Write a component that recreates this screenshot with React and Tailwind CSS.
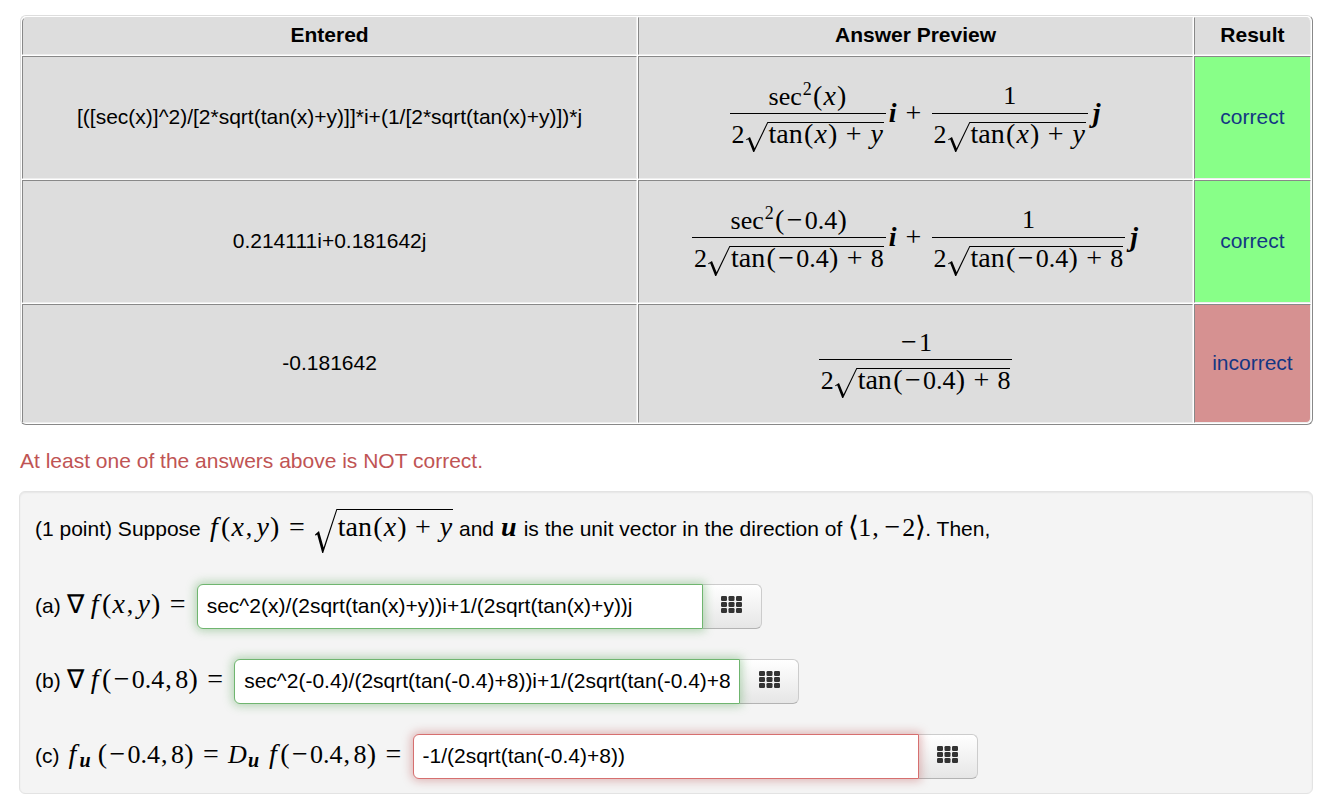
import { useState } from 'react'

// ---- small math typesetting helpers ----

function M({ children }) {
  return (
    <span className="inline-flex items-baseline whitespace-nowrap font-['Liberation_Serif',serif] text-[26px] leading-[22px]">
      {children}
    </span>
  )
}

function Var({ children }) {
  return <span className="w-[14px] text-center text-[28px] italic">{children}</span>
}

function Vec({ children }) {
  return <span className="px-px text-[28px] font-bold italic">{children}</span>
}

function Paren({ children }) {
  return <span className="w-[10px] text-center text-[28px]">{children}</span>
}

// binary operator
function Op({ children }) {
  return <span className="w-8 text-center text-[28px]">{children}</span>
}

function Equals() {
  return <span className="w-[34px] text-center text-[28px]">=</span>
}

function Minus() {
  return <span className="w-5 text-center text-[28px]">−</span>
}

function Comma() {
  return <span className="w-[11px] pl-px">,</span>
}

function Nabla() {
  return <span className="w-[21px]">∇</span>
}

function Sub({ children }) {
  return <sub className="top-1 w-[18px] text-[20px] leading-none font-bold italic">{children}</sub>
}

function Frac({ top, bottom }) {
  return (
    <span className="inline-flex flex-col items-center pb-[2px]">
      <span className="flex h-7 items-baseline pb-[6px]">{top}</span>
      <span className="flex items-baseline justify-center self-stretch border-t border-black px-[2px] pt-2">
        {bottom}
      </span>
    </span>
  )
}

function Sqrt({ tall, children }) {
  return (
    <span className="inline-flex items-baseline">
      <span className="relative ml-px w-[22px] self-stretch">
        <svg
          className={'absolute top-0 left-0 w-full ' + (tall ? 'h-[44px]' : 'h-[30px]')}
          viewBox="0 0 22 44"
          preserveAspectRatio="none"
          aria-hidden="true"
        >
          <path d="M0 25.5 L4 22 L8.6 38.5 L21.4 0 L22 0 L22 1.6 L8.2 44 L7.2 44 L2.2 25.4 L0.6 26.8 Z" />
        </svg>
      </span>
      <span className={'flex items-baseline border-t border-black ' + (tall ? 'pt-[6px]' : '')}>{children}</span>
    </span>
  )
}

function Tan() {
  return <span className="px-px text-[28px]">tan</span>
}

function TanXY() {
  return (
    <>
      <Tan />
      <Paren>(</Paren>
      <Var>x</Var>
      <Paren>)</Paren>
      <Op>+</Op>
      <Var>y</Var>
    </>
  )
}

function TanNum() {
  return (
    <>
      <Tan />
      <Paren>(</Paren>
      <Minus />
      <span>0.4</span>
      <Paren>)</Paren>
      <Op>+</Op>
      <span>8</span>
    </>
  )
}

// (x, y)
function PointXY() {
  return (
    <>
      <Paren>(</Paren>
      <Var>x</Var>
      <Comma />
      <Var>y</Var>
      <Paren>)</Paren>
    </>
  )
}

// (-0.4, 8)
function PointNum() {
  return (
    <>
      <Paren>(</Paren>
      <Minus />
      <span>0.4</span>
      <Comma />
      <span>8</span>
      <Paren>)</Paren>
    </>
  )
}

function Sec({ children }) {
  return (
    <>
      <span>sec</span>
      <sup className="top-[-10px] px-px text-[18px] leading-none">2</sup>
      <Paren>(</Paren>
      {children}
      <Paren>)</Paren>
    </>
  )
}

function Root({ children }) {
  return (
    <>
      <span>2</span>
      <Sqrt>{children}</Sqrt>
    </>
  )
}

function GradientPreview({ arg, radicand }) {
  return (
    <M>
      <span className="inline-flex items-center">
        <Frac top={<Sec>{arg}</Sec>} bottom={<Root>{radicand}</Root>} />
        <span className="flex items-baseline px-[2px] pb-[8px]">
          <Vec>i</Vec>
          <Op>+</Op>
        </span>
        <Frac top="1" bottom={<Root>{radicand}</Root>} />
        <span className="flex items-baseline pb-[8px] pl-[4px]">
          <Vec>j</Vec>
        </span>
      </span>
    </M>
  )
}

const RESULTS = [
  {
    entered: '[([sec(x)]^2)/[2*sqrt(tan(x)+y)]]*i+(1/[2*sqrt(tan(x)+y)])*j',
    preview: <GradientPreview arg={<Var>x</Var>} radicand={<TanXY />} />,
    correct: true,
    height: 'h-[123px]',
  },
  {
    entered: '0.214111i+0.181642j',
    preview: (
      <GradientPreview
        arg={
          <>
            <Minus />
            <span>0.4</span>
          </>
        }
        radicand={<TanNum />}
      />
    ),
    correct: true,
    height: 'h-[123px]',
  },
  {
    entered: '-0.181642',
    preview: (
      <M>
        <Frac
          top={
            <>
              <Minus />
              <span>1</span>
            </>
          }
          bottom={
            <Root>
              <TanNum />
            </Root>
          }
        />
      </M>
    ),
    correct: false,
    height: 'h-[119px]',
  },
]

const CELL = 'border border-t-[#888] border-l-[#888] border-r-[#eee] border-b-[#eee] px-0 pt-0 pb-[2px] text-center align-middle '

function ResultsTable() {
  return (
    <div className="pl-px">
      <table className="w-full table-fixed border-separate border-spacing-px rounded-md border border-t-[#ddd] border-r-[#888] border-b-[#888] border-l-[#ddd]">
        <colgroup>
          <col className="w-[47.8%]" />
          <col className="w-[43.1%]" />
          <col />
        </colgroup>
        <thead>
          <tr className="h-[38px]">
            <th className={CELL + 'rounded-tl-[5px] border-t-[#ddd] bg-[#ddd]'}>Entered</th>
            <th className={CELL + 'border-t-[#ddd] bg-[#ddd]'}>Answer Preview</th>
            <th className={CELL + 'rounded-tr-[5px] border-t-[#ddd] bg-[#ddd]'}>Result</th>
          </tr>
        </thead>
        <tbody>
          {RESULTS.map((r) => (
            <tr key={r.entered} className={r.height}>
              <td className={CELL + 'bg-[#ddd]'}>{r.entered}</td>
              <td className={CELL + 'bg-[#ddd]'}>
                <div className="flex justify-center">{r.preview}</div>
              </td>
              <td className={CELL + (r.correct ? 'bg-[#88ff88]' : 'rounded-br-[5px] bg-[#d69191]')}>
                <a href="#answers" className="text-[#133783]">
                  {r.correct ? 'correct' : 'incorrect'}
                </a>
              </td>
            </tr>
          ))}
        </tbody>
      </table>
    </div>
  )
}

function GridIcon() {
  return (
    <svg width="21" height="17" viewBox="0 0 21 17" fill="#333" aria-hidden="true">
      {[0, 6, 12].map((y) =>
        [0, 7.5, 15].map((x) => <rect key={x + '-' + y} x={x} y={y} width="6" height="5" rx="1.2" />),
      )}
    </svg>
  )
}

function AnswerRow({ id, part, label, initial, correct }) {
  const [value, setValue] = useState(initial)

  return (
    <div className="flex items-center">
      <label htmlFor={id} className="flex items-baseline gap-[6px] pb-[2px] whitespace-nowrap">
        <span>({part})</span>
        <M>{label}</M>
      </label>
      <div className="ml-[2px] flex">
        <input
          id={id}
          type="text"
          value={value}
          onChange={(e) => setValue(e.target.value)}
          className={
            'relative h-[45px] w-[506px] rounded-l-md border bg-white px-[9px] pb-[2px] text-black outline-none ' +
            (correct
              ? 'border-[#6fb56f] shadow-[0_0_10px_2px_rgba(81,163,81,0.4)]'
              : 'border-[#d66f6f] shadow-[0_0_10px_2px_rgba(191,84,84,0.4)]')
          }
        />
        <button
          type="button"
          aria-label="Open equation editor"
          className="flex h-[45px] w-[59px] items-center justify-center rounded-r-md border border-l-0 border-[#ccc] border-b-[#b3b3b3] bg-linear-to-b from-white to-[#e6e6e6] pb-1"
        >
          <GridIcon />
        </button>
      </div>
    </div>
  )
}

function Problem() {
  return (
    <section className="mt-[15px] flex flex-col rounded-md border border-[#e3e3e3] bg-[#f4f4f4] p-[14px] shadow-[inset_0_1px_2px_rgba(0,0,0,0.06)]">
      <p className="flex h-[48px] items-baseline gap-[6px] pt-[3px] pl-px whitespace-nowrap">
        <span>(1 point) Suppose</span>
        <M>
          <Var>f</Var>
          <PointXY />
          <Equals />
          <Sqrt tall>
            <TanXY />
          </Sqrt>
        </M>
        <span>and</span>
        <M>
          <Vec>u</Vec>
        </M>
        <span>is the unit vector in the direction of</span>
        <span className="flex items-baseline">
          <M>
            <Paren>⟨</Paren>
            <span>1</span>
            <Comma />
            <Minus />
            <span>2</span>
            <Paren>⟩</Paren>
          </M>
          <span>. Then,</span>
        </span>
      </p>

      <div className="mt-[30px] flex flex-col gap-[30px] pl-px">
        <AnswerRow
          id="answer-a"
          part="a"
          correct
          initial="sec^2(x)/(2sqrt(tan(x)+y))i+1/(2sqrt(tan(x)+y))j"
          label={
            <>
              <Nabla />
              <Var>f</Var>
              <PointXY />
              <Equals />
            </>
          }
        />
        <AnswerRow
          id="answer-b"
          part="b"
          correct
          initial="sec^2(-0.4)/(2sqrt(tan(-0.4)+8))i+1/(2sqrt(tan(-0.4)+8))j"
          label={
            <>
              <Nabla />
              <Var>f</Var>
              <PointNum />
              <Equals />
            </>
          }
        />
        <AnswerRow
          id="answer-c"
          part="c"
          initial="-1/(2sqrt(tan(-0.4)+8))"
          label={
            <>
              <Var>f</Var>
              <Sub>u</Sub>
              <PointNum />
              <Equals />
              <span className="w-5 italic">D</span>
              <Sub>u</Sub>
              <Var>f</Var>
              <PointNum />
              <Equals />
            </>
          }
        />
      </div>
    </section>
  )
}

export default function App() {
  return (
    <main className="bg-white pt-[15px] pr-[15px] pb-[2px] pl-[19px] font-['Liberation_Sans',sans-serif] text-[21px] leading-[30px] text-black">
      <ResultsTable />
      <p className="mt-[21px] pl-px text-[#bf5454]">At least one of the answers above is NOT correct.</p>
      <Problem />
    </main>
  )
}
